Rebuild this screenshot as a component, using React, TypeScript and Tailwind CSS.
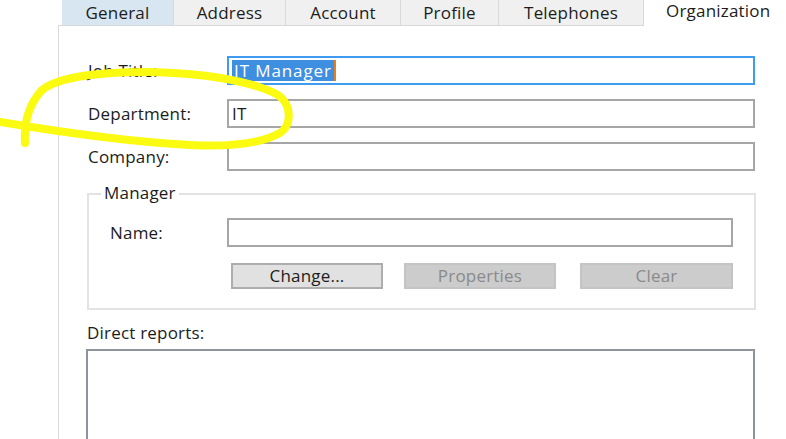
import React from "react";

const tabs = [
  { label: "General", w: "w-[112px]", bg: "bg-[#d8e6f2]" },
  { label: "Address", w: "w-[112px]", bg: "bg-[#f0f0f0]" },
  { label: "Account", w: "w-[115px]", bg: "bg-[#f0f0f0]" },
  { label: "Profile", w: "w-[98px]", bg: "bg-[#f0f0f0]" },
  { label: "Telephones", w: "w-[145px]", bg: "bg-[#f0f0f0]" },
];

function Field({ label, children }: { label: string; children: React.ReactNode }) {
  return (
    <div className="flex items-center h-[29px]">
      <div className="w-[168px] pl-[29px] text-[17px] tracking-[0.2px] text-[#1c1c1c]">{label}</div>
      {children}
    </div>
  );
}

function TextBox({ value }: { value?: string }) {
  return (
    <div className="w-[528px] h-[29px] border-2 border-[#a6a6a6] bg-white flex items-center px-[3px] text-[17px] tracking-[0.2px] text-[#1c1c1c]">
      {value}
    </div>
  );
}

function Btn({ label, disabled, w }: { label: string; disabled?: boolean; w: string }) {
  return (
    <div
      className={
        disabled
          ? `${w} h-[26px] border-2 border-[#c4c4c4] bg-[#cccccc] text-[#8a8a8a] flex items-center justify-center text-[17px] tracking-[0.2px]`
          : `${w} h-[26px] border-2 border-[#adadad] bg-[#e1e1e1] text-[#1c1c1c] flex items-center justify-center text-[17px] tracking-[0.2px]`
      }
    >
      {label}
    </div>
  );
}

export default function App() {
  return (
    <div className="relative w-[786px] h-[439px] overflow-hidden bg-white font-['Open_Sans',sans-serif]">
      {/* tab strip */}
      <div className="flex h-[26px] ml-[58px]">
        <div className="w-[4px] border-b border-[#d9d9d9]" />
        {tabs.map((t) => (
          <div
            key={t.label}
            className={`${t.w} ${t.bg} border-r border-b border-[#d9d9d9] flex items-center justify-center pt-[1px] text-[17px] tracking-[0.2px] text-[#1c1c1c]`}
          >
            {t.label}
          </div>
        ))}
        <div className="flex-1 bg-white flex items-start pl-[22px] text-[17px] tracking-[0.2px] text-[#1c1c1c] leading-[22px]">
          Organization
        </div>
      </div>

      {/* tab page */}
      <div className="ml-[58px] h-[413px] border-l border-[#d9d9d9] flex flex-col">
        <div className="mt-[30px] flex flex-col gap-[14px]">
          <Field label="Job Title:">
            <div className="w-[528px] h-[29px] border-2 border-[#3e9bf0] bg-white flex items-center px-[3px]">
              <span className="bg-[#3f8fe0] text-white text-[17px] tracking-[0.9px] leading-[21px] px-[2px]">IT Manager</span>
              <span className="w-[2px] h-[21px] bg-[#e0801e]" />
            </div>
          </Field>
          <Field label="Department:">
            <TextBox value="IT" />
          </Field>
          <Field label="Company:">
            <TextBox />
          </Field>
        </div>

        {/* manager group */}
        <div className="relative ml-[28px] mt-[22px] w-[669px] h-[117px] border-2 border-[#e3e3e3]">
          <div className="absolute left-[12px] top-[-13px] bg-white px-[3px] text-[17px] tracking-[0.2px] text-[#1c1c1c] leading-[22px]">
            Manager
          </div>
          <div className="flex items-center mt-[23px]">
            <div className="w-[138px] pl-[21px] text-[17px] tracking-[0.2px] text-[#1c1c1c]">Name:</div>
            <div className="w-[506px] h-[29px] border-2 border-[#a6a6a6] bg-white" />
          </div>
          <div className="flex mt-[16px] ml-[142px]">
            <Btn label="Change..." w="w-[152px]" />
            <div className="ml-[21px]">
              <Btn label="Properties" disabled w="w-[152px]" />
            </div>
            <div className="ml-[24px]">
              <Btn label="Clear" disabled w="w-[153px]" />
            </div>
          </div>
        </div>

        <div className="ml-[28px] mt-[12px] text-[17px] tracking-[0.2px] text-[#1c1c1c] leading-[22px]">Direct reports:</div>
        <div className="ml-[27px] mt-[5px] w-[669px] flex-1 border-t-2 border-l-2 border-r-2 border-[#8f939c] bg-white" />
      </div>

      {/* yellow marker loop */}
      <svg className="absolute left-0 top-0 pointer-events-none" width="786" height="439" viewBox="0 0 786 439">
        <path
          d="M25 143 C24 125 28 105 42 90 C60 76 100 72 150 72 C200 73 250 80 278 95 C292 105 292 125 280 133 C262 143 230 147 190 145 C130 142 60 132 0 122"
          fill="none"
          stroke="#fbfb12"
          strokeWidth="8"
          strokeLinecap="round"
        />
      </svg>
    </div>
  );
}
